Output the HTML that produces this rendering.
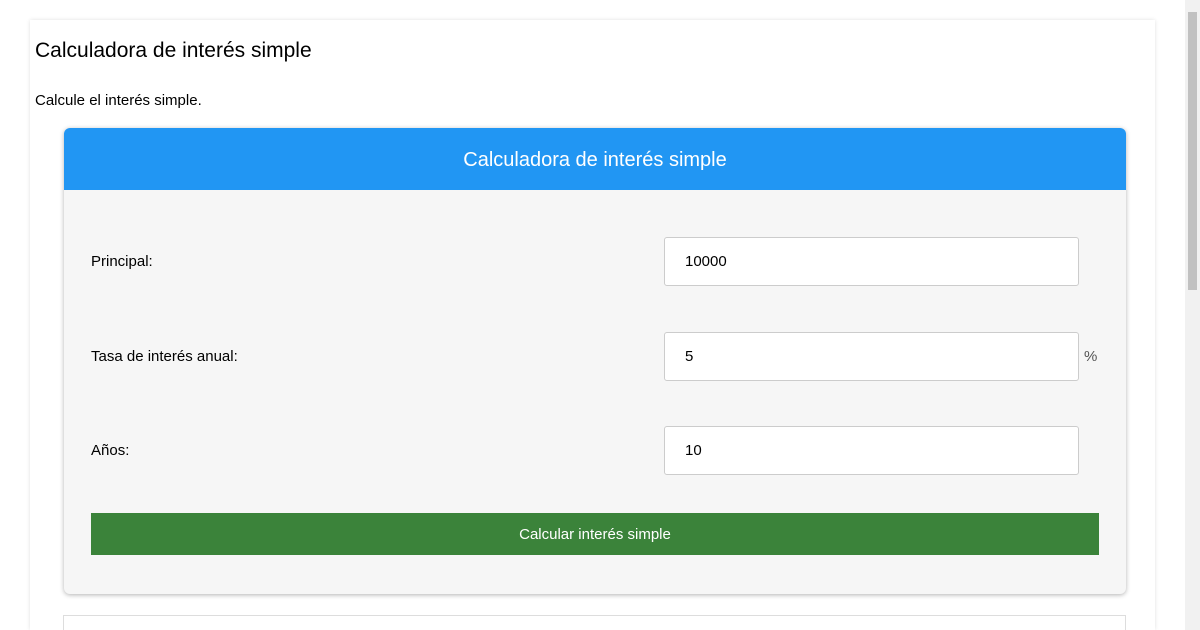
<!DOCTYPE html>
<html style="height:630px;overflow:hidden"><head><meta charset="utf-8"><style>
body{margin:0;background:#fff;font-family:"Liberation Sans",sans-serif;width:1200px;height:630px;overflow:hidden;position:relative}
.page{position:absolute;left:30px;top:20px;width:1125px;height:610px;background:#fff;box-shadow:0 0 4px rgba(0,0,0,.12)}
h1{position:absolute;left:5px;top:19px;margin:0;font-size:21px;font-weight:normal;color:#000}
.sub{position:absolute;left:5px;top:72px;font-size:15px;color:#000}
.card{position:absolute;left:34px;top:108px;width:1062px;height:466px;background:#f6f6f6;border-radius:6px;box-shadow:0 1px 5px rgba(0,0,0,.3);overflow:hidden}
.hd{height:62px;background:#2196f3;color:#fff;font-size:20px;text-align:center;line-height:64px}
.lbl{position:absolute;left:27px;font-size:15px;color:#000}
.in{position:absolute;left:600px;width:415px;height:49px;background:#fff;border:1px solid #ccc;border-radius:3px;box-sizing:border-box;padding-left:20px;line-height:47px;font-size:15px}
.btn{position:absolute;left:27px;top:385px;width:1008px;height:42px;background:#3b833a;color:#fff;text-align:center;line-height:43px;font-size:15px}
.pct{position:absolute;left:1020px;top:220px;font-size:15px;color:#555}
.card2{position:absolute;left:33px;top:595px;width:1063px;height:15px;background:#fff;border:1px solid #ddd;border-bottom:none;box-sizing:border-box}
.sb{position:absolute;right:0;top:0;width:15px;height:630px;background:#f1f1f1}
.th{position:absolute;right:3px;top:12px;width:9px;height:278px;background:#c1c1c1}
</style></head><body>
<div class="page">
<h1>Calculadora de interés simple</h1>
<div class="sub">Calcule el interés simple.</div>
<div class="card">
<div class="hd">Calculadora de interés simple</div>
<div class="lbl" style="top:125px">Principal:</div>
<div class="in" style="top:109px">10000</div>
<div class="lbl" style="top:220px">Tasa de interés anual:</div>
<div class="in" style="top:204px">5</div>
<div class="pct">%</div>
<div class="lbl" style="top:314px">Años:</div>
<div class="in" style="top:298px">10</div>
<div class="btn">Calcular interés simple</div>
</div>
<div class="card2"></div>
</div>
<div class="sb"><div class="th"></div></div>
</body></html>
